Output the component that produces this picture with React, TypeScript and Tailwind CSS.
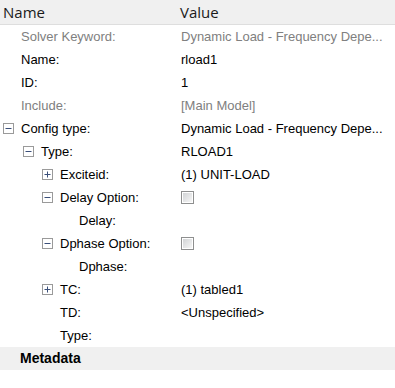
type Row = {
  label: string
  value?: string
  depth: number
  toggle?: 'plus' | 'minus'
  muted?: boolean
  check?: boolean
}

const ROWS: Row[] = [
  { label: 'Solver Keyword:', value: 'Dynamic Load - Frequency Depe...', depth: 0, muted: true },
  { label: 'Name:', value: 'rload1', depth: 0 },
  { label: 'ID:', value: '1', depth: 0 },
  { label: 'Include:', value: '[Main Model]', depth: 0, muted: true },
  { label: 'Config type:', value: 'Dynamic Load - Frequency Depe...', depth: 0, toggle: 'minus' },
  { label: 'Type:', value: 'RLOAD1', depth: 1, toggle: 'minus' },
  { label: 'Exciteid:', value: '(1) UNIT-LOAD', depth: 2, toggle: 'plus' },
  { label: 'Delay Option:', depth: 2, toggle: 'minus', check: true },
  { label: 'Delay:', depth: 3 },
  { label: 'Dphase Option:', depth: 2, toggle: 'minus', check: true },
  { label: 'Dphase:', depth: 3 },
  { label: 'TC:', value: '(1) tabled1', depth: 2, toggle: 'plus' },
  { label: 'TD:', value: '<Unspecified>', depth: 2 },
  { label: 'Type:', depth: 2 },
]

const INDENT = ['pl-[21px]', 'pl-[41px]', 'pl-[60px]', 'pl-[79px]']

function Toggle({ kind }: { kind: 'plus' | 'minus' }) {
  return (
    <svg width="11" height="11" viewBox="0 0 11 11" className="absolute -left-[18px] top-[6px]">
      <rect x="0.5" y="0.5" width="10" height="10" fill="#fff" stroke="#9a9a9a" />
      <line x1="2.5" y1="5.5" x2="8.5" y2="5.5" stroke="#3a4f7a" />
      {kind === 'plus' && <line x1="5.5" y1="2.5" x2="5.5" y2="8.5" stroke="#3a4f7a" />}
    </svg>
  )
}

function Check() {
  return (
    <div className="w-[13px] h-[13px] border border-[#8e8f8f] bg-white p-[1px]">
      <div className="w-full h-full bg-gradient-to-br from-[#d2d4d6] to-[#f6f6f6]" />
    </div>
  )
}

export default function App() {
  return (
    <div className="w-[395px] h-[388px] bg-white text-[13px] text-black font-['Liberation_Sans',Arial,sans-serif] overflow-hidden">
      <div className="flex h-[25px] items-center bg-[#f0f0f0] border-b border-[#dedede] text-[15px] text-[#1a1a1a] font-['Open_Sans','Liberation_Sans',sans-serif]">
        <div className="w-[180px] pl-[3px]">Name</div>
        <div>Value</div>
      </div>
      {ROWS.map((r, i) => (
        <div key={i} className={`flex h-[23px] items-center ${r.muted ? 'text-[#808080]' : ''}`}>
          <div className={`w-[180px] ${INDENT[r.depth]}`}>
            <div className="relative leading-[23px]">
              {r.toggle && <Toggle kind={r.toggle} />}
              {r.label}
            </div>
          </div>
          <div className="pl-[1px] whitespace-nowrap">
            {r.check ? <Check /> : r.value}
          </div>
        </div>
      ))}
      <div className="flex h-[23px] items-center bg-[#f0f0f0] pl-[20px] text-[14px] font-bold">Metadata</div>
    </div>
  )
}
